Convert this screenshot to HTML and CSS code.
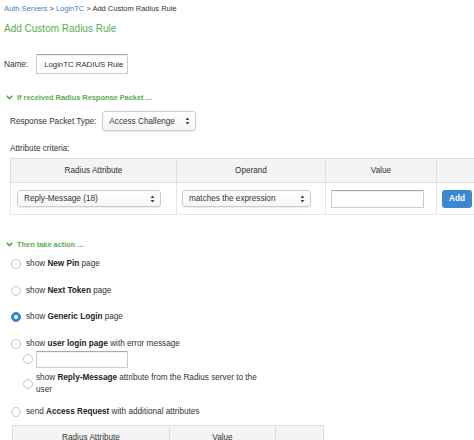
FILE: index.html
```html
<!DOCTYPE html>
<html lang="en">
  <head>
    <meta charset="UTF-8" />
    <link rel="stylesheet" href="styles.css">
  </head>
  <body>
    <div class="page">
      <div class="crumbs">
        <a class="link">Auth Servers</a> &gt; <a class="link">LoginTC</a> &gt; Add Custom Radius Rule
      </div>
      <h1 class="title">Add Custom Radius Rule</h1>

      <div class="name-row">
        <span>Name:</span>
        <div class="text-input name-input">LoginTC RADIUS Rule</div>
      </div>

      <div class="section-head">
        <svg class="chevron" width="7" height="5" viewBox="0 0 7 5">
          <path d="M0.8 0.8 L3.5 3.6 L6.2 0.8" fill="none" stroke="#5aac50" stroke-width="1.7" />
        </svg>
        If received Radius Response Packet ...
      </div>

      <div class="section">
        <div class="type-row">
          <span>Response Packet Type:</span>
          <div class="select type-select">
            <span>Access Challenge</span>
            <svg class="arrows" width="5" height="8" viewBox="0 0 5 8">
              <path d="M0.5 3 L2.5 0.6 L4.5 3 Z M0.5 5 L2.5 7.4 L4.5 5 Z" fill="#444" />
            </svg>
          </div>
        </div>
        <div class="criteria-label">Attribute criteria:</div>
        <div class="table-wrap">
          <table class="grid criteria">
            <tr>
              <th class="col-attr">Radius Attribute</th>
              <th class="col-op">Operand</th>
              <th class="col-val">Value</th>
              <th class="col-btn"></th>
            </tr>
            <tr>
              <td>
                <div class="select attr-select">
                  <span>Reply-Message (18)</span>
                  <svg class="arrows" width="5" height="8" viewBox="0 0 5 8">
                    <path d="M0.5 3 L2.5 0.6 L4.5 3 Z M0.5 5 L2.5 7.4 L4.5 5 Z" fill="#444" />
                  </svg>
                </div>
              </td>
              <td>
                <div class="select op-select">
                  <span>matches the expression</span>
                  <svg class="arrows" width="5" height="8" viewBox="0 0 5 8">
                    <path d="M0.5 3 L2.5 0.6 L4.5 3 Z M0.5 5 L2.5 7.4 L4.5 5 Z" fill="#444" />
                  </svg>
                </div>
              </td>
              <td><div class="text-input value-input"></div></td>
              <td><button class="add-button">Add</button></td>
            </tr>
          </table>
        </div>
      </div>

      <div class="section-head action-head">
        <svg class="chevron" width="7" height="5" viewBox="0 0 7 5">
          <path d="M0.8 0.8 L3.5 3.6 L6.2 0.8" fill="none" stroke="#5aac50" stroke-width="1.7" />
        </svg>
        Then take action ...
      </div>

      <div class="actions">
        <div class="radio-row">
          <span class="radio"></span>
          <span>show <b>New Pin</b> page</span>
        </div>
        <div class="radio-row">
          <span class="radio"></span>
          <span>show <b>Next Token</b> page</span>
        </div>
        <div class="radio-row">
          <span class="radio checked"></span>
          <span>show <b>Generic Login</b> page</span>
        </div>
        <div class="radio-row">
          <span class="radio"></span>
          <span>show <b>user login page</b> with error message</span>
        </div>
        <div class="sub-options">
          <div class="sub-row">
            <span class="radio"></span>
            <div class="text-input message-input"></div>
          </div>
          <div class="sub-row sub-text">
            <span class="radio"></span>
            <p class="sub-label">show <b>Reply-Message</b> attribute from the Radius server to the<br>user</p>
          </div>
        </div>
        <div class="radio-row last-row">
          <span class="radio"></span>
          <span>send <b>Access Request</b> with additional attributes</span>
        </div>
        <table class="grid extra">
          <tr>
            <th class="col-attr2">Radius Attribute</th>
            <th class="col-val2">Value</th>
            <th class="col-btn2"></th>
          </tr>
        </table>
      </div>
    </div>
  </body>
</html>
```

FILE: styles.css
```css
html,
body {
  margin: 0;
  overflow: hidden;
  background-color: white;
}
.page {
  font-family: "Liberation Sans", Arial, sans-serif;
  font-size: 8.2px;
  color: #333;
  padding: 0 4px;
}
.crumbs {
  font-size: 7.5px;
  line-height: 12px;
  padding-top: 3px;
  color: #333;
}
.link {
  color: #3a7fc4;
}
.title {
  margin: 7px 0 0 0;
  font-size: 10px;
  line-height: 14px;
  font-weight: normal;
  color: #5aac50;
}
.name-row {
  display: flex;
  align-items: center;
  gap: 8px;
  margin-top: 18px;
  height: 20px;
}
.text-input {
  box-sizing: border-box;
  border: 1px solid #ccc;
  border-top-color: #aaa;
  background-color: white;
  box-shadow: inset 0 1px 1px rgba(0, 0, 0, 0.06);
  display: flex;
  align-items: center;
}
.name-input {
  width: 92px;
  height: 20px;
  padding-left: 7px;
  white-space: nowrap;
  overflow: hidden;
  font-size: 7.8px;
}
.section-head {
  display: flex;
  align-items: center;
  gap: 4px;
  margin-top: 18px;
  padding-left: 2px;
  height: 10px;
  font-size: 7.4px;
  font-weight: bold;
  color: #5aac50;
}
.section {
  padding-left: 6px;
}
.type-row {
  display: flex;
  align-items: center;
  gap: 6px;
  margin-top: 9px;
  height: 20px;
}
.select {
  box-sizing: border-box;
  display: flex;
  align-items: center;
  justify-content: space-between;
  border: 1px solid #ccc;
  border-radius: 3px;
  background: linear-gradient(#ffffff, #f6f6f6);
  box-shadow: 0 1px 1px rgba(0, 0, 0, 0.08);
  padding: 0 5px 0 6px;
  color: #333;
  white-space: nowrap;
}
.type-select {
  width: 94px;
  height: 20px;
}
.criteria-label {
  margin-top: 13px;
  line-height: 10px;
}
.table-wrap {
  margin-top: 4px;
  width: 480px;
}
.grid {
  border-collapse: collapse;
  table-layout: fixed;
}
.grid th {
  background-color: #f4f4f4;
  border: 1px solid #dedede;
  font-weight: normal;
  color: #333;
  height: 23px;
  padding: 0;
  text-align: center;
}
.grid td {
  border: 1px solid #e6e6e6;
  height: 31px;
  padding: 0 0 0 5px;
}
.col-attr {
  width: 165px;
}
.col-op {
  width: 148px;
}
.col-val {
  width: 110px;
}
.col-btn {
  width: 45px;
}
.attr-select {
  width: 144px;
  height: 17px;
  margin-left: 1px;
}
.op-select {
  width: 129px;
  height: 17px;
}
.value-input {
  width: 93px;
  height: 18px;
}
.add-button {
  width: 30px;
  height: 18px;
  border: none;
  border-radius: 3px;
  background-color: #3a88d2;
  color: white;
  font-family: "Liberation Sans", Arial, sans-serif;
  font-size: 8.2px;
  font-weight: bold;
  padding: 0;
}
.action-head {
  margin-top: 24px;
}
.actions {
  padding-left: 7px;
}
.radio {
  box-sizing: border-box;
  display: inline-block;
  flex: none;
  width: 10px;
  height: 10px;
  border: 1px solid #c4c4c4;
  border-radius: 50%;
  background-color: white;
  position: relative;
}
.radio.checked {
  background-color: #3a88d6;
  border-color: #3480cf;
}
.radio.checked:after {
  content: "";
  position: absolute;
  width: 4px;
  height: 4px;
  left: 2px;
  top: 2px;
  border-radius: 50%;
  background-color: white;
}
.radio-row {
  display: flex;
  align-items: center;
  gap: 5px;
  line-height: 12px;
  margin-top: 14.5px;
}
.radio-row:first-child {
  margin-top: 9px;
}
.sub-options {
  padding-left: 12px;
}
.sub-row {
  display: flex;
  align-items: center;
  gap: 3px;
  margin-top: 4px;
}
.sub-options .sub-row:first-child {
  margin-top: 1px;
}
.message-input {
  width: 92px;
  height: 17px;
}
.sub-label {
  margin: 0;
  line-height: 12.5px;
}
.sub-text b,
.radio-row b {
  color: #222;
}
.last-row {
  margin-top: 9px;
}
.extra {
  margin-top: 7px;
  margin-left: 1px;
}
.col-attr2 {
  width: 156px;
}
.col-val2 {
  width: 105px;
}
.col-btn2 {
  width: 47px;
}
```
